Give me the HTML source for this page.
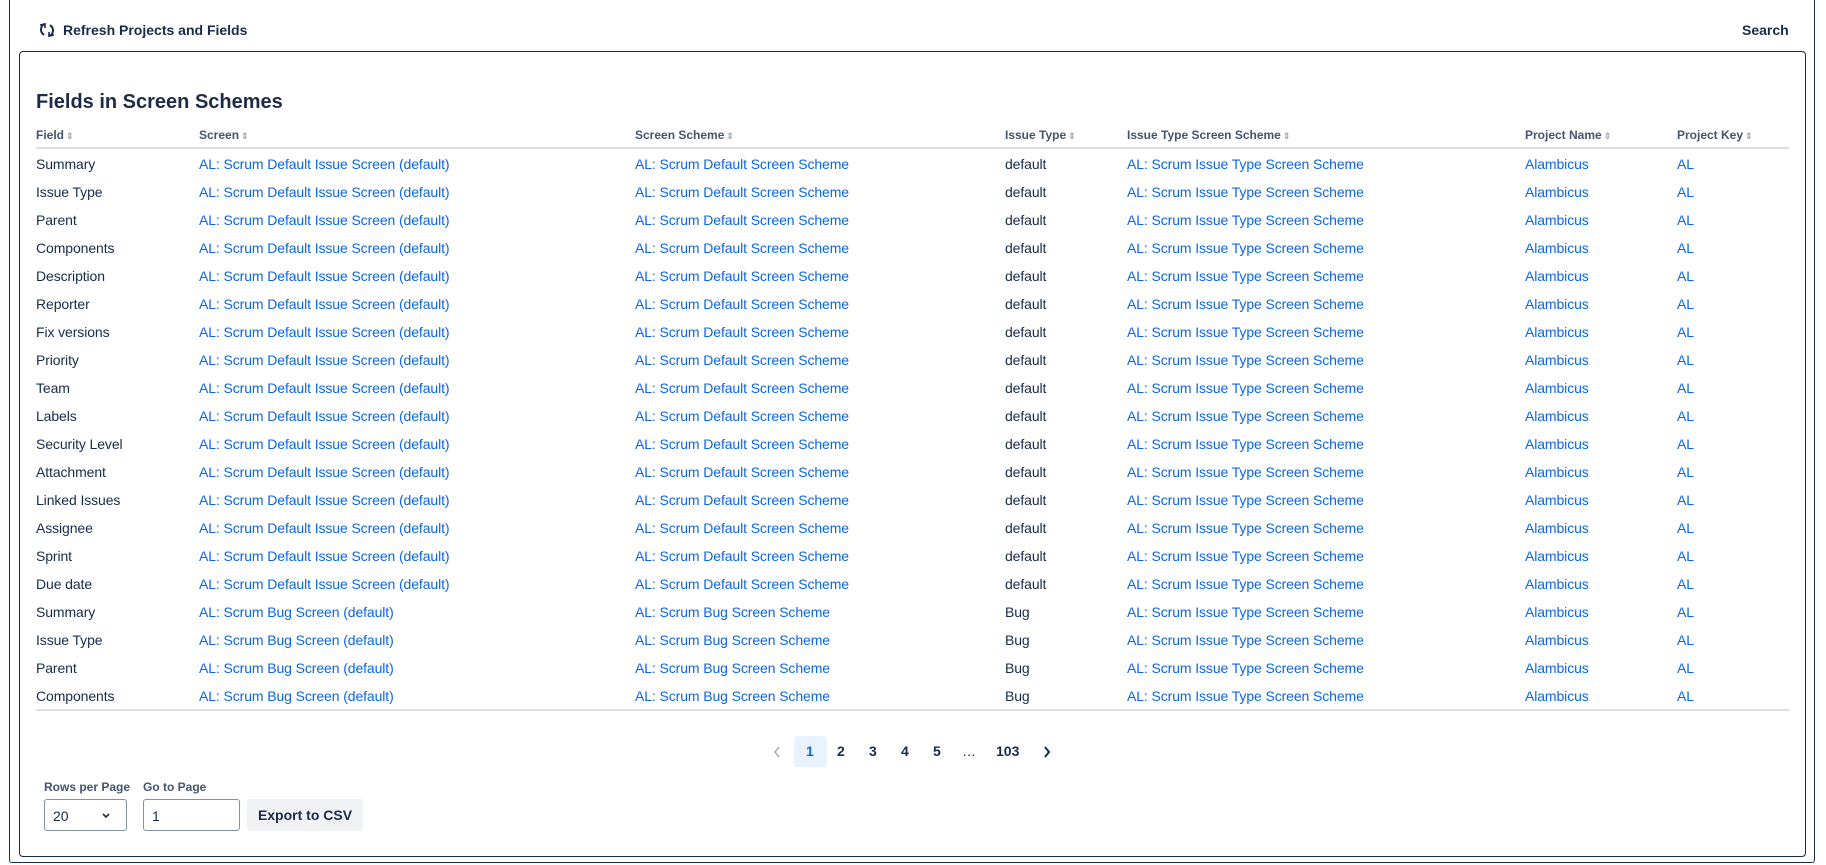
<!DOCTYPE html>
<html><head><meta charset="utf-8"><style>
*{box-sizing:border-box;margin:0;padding:0}
body{width:1826px;height:865px;position:relative;background:#fff;font-family:"Liberation Sans",sans-serif;color:#172b4d;overflow:hidden}
.outer{position:absolute;left:9px;top:-4px;width:1806px;height:867px;border:1px solid #172b4d;border-radius:3px}
.abs{position:absolute;white-space:nowrap}
.panel{position:absolute;left:19px;top:51px;width:1787px;height:806px;border:1.5px solid #172b4d;border-radius:4px}
.th{position:absolute;top:128px;font-size:12px;font-weight:bold;color:#44546f}
.th i{font-style:normal;color:#a5adba;font-size:9px;margin-left:2px}
.row{position:absolute;left:0;width:1826px;height:28px;font-size:14px;letter-spacing:-0.1px}
.row span{position:absolute;top:0}
.l{color:#0c66e4}
.pg{position:absolute;top:743px;font-size:14px;font-weight:bold;color:#172b4d}
</style></head><body>
<div class="outer"></div>
<svg class="abs" style="left:38px;top:21px" width="18" height="18" viewBox="0 0 18 18" fill="none" stroke="#172b4d" stroke-width="2"><path d="M7 3 C3 4 2 9 4 12 L6 14"/><path d="M2 4 L7 3 L7 7" stroke-width="1.6"/><path d="M11 15 C15 14 16 9 14 6 L12 4"/><path d="M16 14 L11 15 L11 11" stroke-width="1.6"/></svg>
<div class="abs" style="left:63px;top:22px;font-size:14px;font-weight:bold">Refresh Projects and Fields</div>
<div class="abs" style="left:1742px;top:22px;font-size:14px;font-weight:bold">Search</div>
<div class="panel"></div>
<div class="abs" style="left:36px;top:91px;font-size:20px;font-weight:bold;color:#1d2b4a">Fields in Screen Schemes</div>
<div class="th" style="left:36px">Field<i>⇕</i></div>
<div class="th" style="left:199px">Screen<i>⇕</i></div>
<div class="th" style="left:635px">Screen Scheme<i>⇕</i></div>
<div class="th" style="left:1005px">Issue Type<i>⇕</i></div>
<div class="th" style="left:1127px">Issue Type Screen Scheme<i>⇕</i></div>
<div class="th" style="left:1525px">Project Name<i>⇕</i></div>
<div class="th" style="left:1677px">Project Key<i>⇕</i></div>
<div class="abs" style="left:36px;top:147px;width:1753px;height:2px;background:#dcdfe4"></div>
<div id="rows"></div>
<script>
var f=["Summary","Issue Type","Parent","Components","Description","Reporter","Fix versions","Priority","Team","Labels","Security Level","Attachment","Linked Issues","Assignee","Sprint","Due date","Summary","Issue Type","Parent","Components"];
var h="";
for(var i=0;i<20;i++){var b=i>=16;var t=156+i*28;
h+='<div class="row" style="top:'+t+'px"><span style="left:36px">'+f[i]+'</span><span class="l" style="left:199px">'+(b?'AL: Scrum Bug Screen (default)':'AL: Scrum Default Issue Screen (default)')+'</span><span class="l" style="left:635px">'+(b?'AL: Scrum Bug Screen Scheme':'AL: Scrum Default Screen Scheme')+'</span><span style="left:1005px">'+(b?'Bug':'default')+'</span><span class="l" style="left:1127px">AL: Scrum Issue Type Screen Scheme</span><span class="l" style="left:1525px">Alambicus</span><span class="l" style="left:1677px">AL</span></div>';}
document.getElementById("rows").innerHTML=h;
</script>
<div class="abs" style="left:36px;top:709px;width:1753px;height:2px;background:#dcdfe4"></div>
<svg class="abs" style="left:772px;top:745px" width="10" height="14" viewBox="0 0 10 14" fill="none" stroke="#a5adba" stroke-width="1.6"><path d="M7 2 L3 7 L7 12"/></svg>
<div class="abs" style="left:794px;top:736px;width:33px;height:31px;background:#e9f2ff;border-radius:3px"></div>
<div class="pg" style="left:806px;color:#0c66e4">1</div>
<div class="pg" style="left:837px">2</div>
<div class="pg" style="left:869px">3</div>
<div class="pg" style="left:901px">4</div>
<div class="pg" style="left:933px">5</div>
<div class="pg" style="left:962px;font-weight:normal">…</div>
<div class="pg" style="left:996px">103</div>
<svg class="abs" style="left:1042px;top:745px" width="10" height="14" viewBox="0 0 10 14" fill="none" stroke="#172b4d" stroke-width="2"><path d="M3 2 L7 7 L3 12"/></svg>
<div class="abs" style="left:44px;top:780px;font-size:12px;font-weight:bold;color:#44546f">Rows per Page</div>
<div class="abs" style="left:143px;top:780px;font-size:12px;font-weight:bold;color:#44546f">Go to Page</div>
<div class="abs" style="left:44px;top:799px;width:83px;height:32px;border:1px solid #8590a2;border-radius:3px;font-size:14px;padding:8px 0 0 8px">20<svg style="position:absolute;left:56px;top:12px" width="10" height="8" viewBox="0 0 10 8" fill="none" stroke="#172b4d" stroke-width="1.6"><path d="M2 2 L5 5 L8 2"/></svg></div>
<div class="abs" style="left:143px;top:799px;width:97px;height:32px;border:1px solid #8590a2;border-radius:3px;font-size:14px;padding:8px 0 0 8px">1</div>
<div class="abs" style="left:247px;top:799px;width:116px;height:32px;background:#f1f2f4;border-radius:3px;font-size:14px;font-weight:bold;text-align:center;line-height:32px">Export to CSV</div>
</body></html>
